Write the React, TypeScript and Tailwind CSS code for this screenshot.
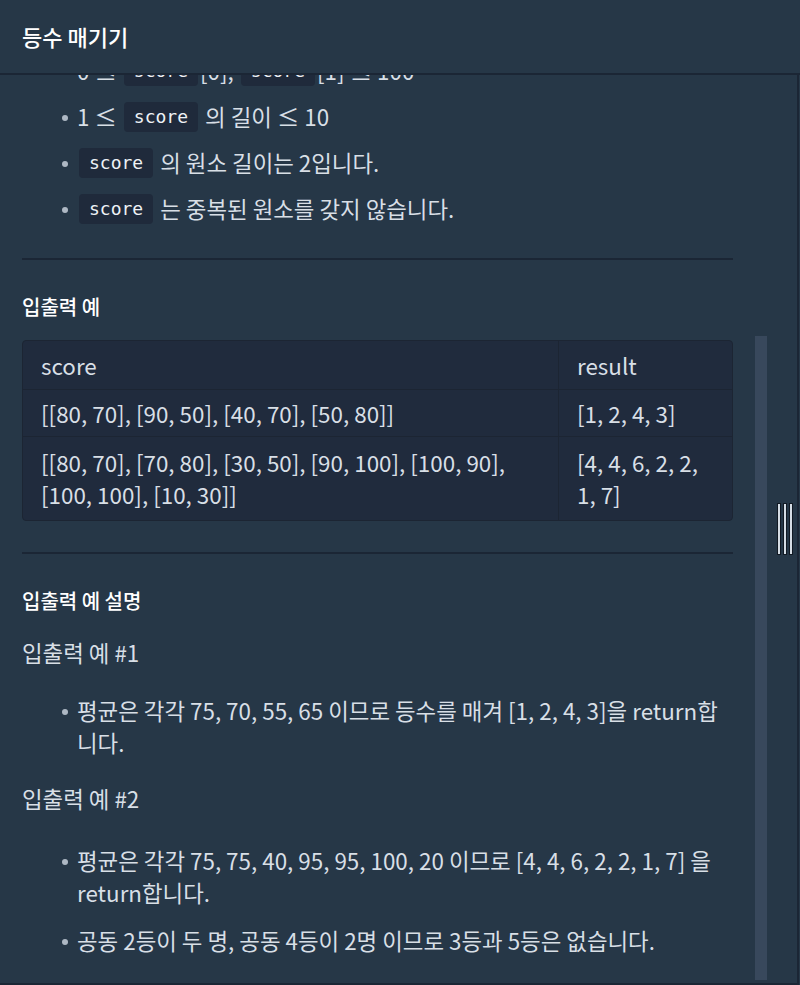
import React from "react";

const Code = ({ children }: { children: React.ReactNode }) => (
  <code className="mx-[2px] mt-[2px] inline-block h-[30px] rounded-[4px] bg-[#1f2a3b] px-[10px] align-top font-['DejaVu_Sans_Mono',monospace] text-[18px] leading-[30px] text-[#eef2f6]">
    {children}
  </code>
);

const Item = ({ children }: { children: React.ReactNode }) => (
  <li className="flex">
    <span className="flex h-[32px] w-[15px] shrink-0 items-center pt-[4px]">
      <span className="h-[6px] w-[6px] rounded-full bg-[#aeb8c4]" />
    </span>
    <div className="min-w-0 flex-1">{children}</div>
  </li>
);

const rows = [
  ["[[80, 70], [90, 50], [40, 70], [50, 80]]", "[1, 2, 4, 3]"],
  [
    "[[80, 70], [70, 80], [30, 50], [90, 100], [100, 90], [100, 100], [10, 30]]",
    "[4, 4, 6, 2, 2, 1, 7]",
  ],
];

const GutterHandle = () => (
  <svg width="16" height="52" viewBox="0 0 16 52">
    {[0, 6, 12].map((x) => (
      <rect
        key={x}
        x={x + 0.5}
        y={0.5}
        width={3}
        height={51}
        fill="#d5dde5"
        stroke="#121a24"
        strokeWidth={1}
      />
    ))}
  </svg>
);

export default function App() {
  return (
    <div className="flex h-[985px] w-[800px] flex-col overflow-hidden bg-[#263747] font-['Noto_Sans_CJK_KR',sans-serif] text-[22.4px] leading-[32px] text-[#d8dfe6]">
      <header className="relative z-10 flex h-[75px] shrink-0 items-center border-b-2 border-[#1b2635] bg-[#263747] px-[22px] pb-[2px]">
        <h1 className="text-[22px] font-medium text-white">등수 매기기</h1>
      </header>

      <div className="flex min-h-0 flex-1">
        <div className="min-w-0 flex-1 overflow-hidden border-b-2 border-[#1b2635] pl-[22px] pr-[22px]">
          <ul className="mt-[-21px] flex flex-col gap-[14px] pl-[40px]">
            <Item>
              0 ≤ <Code>score</Code>[0], <Code>score</Code>[1] ≤ 100
            </Item>
            <Item>
              1 ≤ <Code>score</Code> 의 길이 ≤ 10
            </Item>
            <Item>
              <Code>score</Code> 의 원소 길이는 2입니다.
            </Item>
            <Item>
              <Code>score</Code> 는 중복된 원소를 갖지 않습니다.
            </Item>
          </ul>

          <hr className="mt-[34px] border-t-2 border-[#1b2635]" />

          <h2 className="mt-[33px] text-[20px] font-medium leading-[28px] text-white">입출력 예</h2>

          <table className="mt-[19px] w-full border-separate border-spacing-0 overflow-hidden rounded-[4px] border border-[#1c2533] bg-[#202b3d]">
            <thead>
              <tr>
                <th className="w-[536px] border-r border-[#1c2533] px-[18px] py-[8px] text-left font-normal">score</th>
                <th className="px-[18px] py-[8px] text-left font-normal">result</th>
              </tr>
            </thead>
            <tbody>
              {rows.map(([s, r], i) => (
                <tr key={s}>
                  <td className={i === 0 ? "border-r border-t border-[#1c2533] px-[18px] py-[7px] align-top" : "border-r border-t border-[#1c2533] px-[18px] pb-[10px] pt-[9px] align-top"}>{s}</td>
                  <td className={i === 0 ? "border-t border-[#1c2533] px-[18px] py-[7px] align-top" : "border-t border-[#1c2533] px-[18px] pb-[10px] pt-[9px] align-top"}>{r}</td>
                </tr>
              ))}
            </tbody>
          </table>

          <hr className="mt-[31px] border-t-2 border-[#1b2635]" />

          <h2 className="mt-[33px] text-[20px] font-medium leading-[28px] text-white">입출력 예 설명</h2>

          <p className="mt-[21px]">입출력 예 #1</p>
          <ul className="mt-[26px] flex flex-col gap-[14px] pl-[40px]">
            <Item>평균은 각각 75, 70, 55, 65 이므로 등수를 매겨 [1, 2, 4, 3]을 return합니다.</Item>
          </ul>

          <p className="mt-[24px]">입출력 예 #2</p>
          <ul className="mt-[30px] flex flex-col gap-[16px] pl-[40px]">
            <Item>평균은 각각 75, 75, 40, 95, 95, 100, 20 이므로 [4, 4, 6, 2, 2, 1, 7] 을 return합니다.</Item>
            <Item>공동 2등이 두 명, 공동 4등이 2명 이므로 3등과 5등은 없습니다.</Item>
          </ul>
        </div>

        <div className="w-[12px] shrink-0 border-b-2 border-[#1b2635]">
          <div className="mt-[261px] h-[644px] bg-[#38485c]" />
        </div>

        <div className="flex w-[30px] shrink-0 items-center justify-end border-b-2 border-[#1b2635] pr-[4px]">
          <GutterHandle />
        </div>

        <div className="w-[3px] shrink-0 border-l-2 border-[#1b2635]" />
      </div>
    </div>
  );
}
